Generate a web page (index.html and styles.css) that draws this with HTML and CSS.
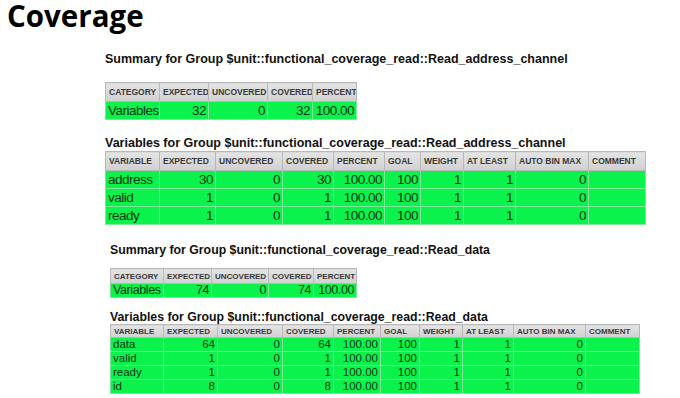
FILE: index.html
```html
<!DOCTYPE html>
<html lang="en">
<head>
  <meta charset="UTF-8">
  <title>Coverage</title>
  <link rel="stylesheet" href="styles.css">
</head>
<body>

  <h1 class="slide-title">Coverage</h1>

  <div class="group group-a">
    <h2 class="group-title t1">Summary for Group $unit::functional_coverage_read::Read_address_channel</h2>
    <table class="cov sum-a">
      <colgroup>
        <col style="width:54px"><col style="width:49px"><col style="width:59px"><col style="width:45px"><col style="width:44px">
      </colgroup>
      <tr class="head"><th>CATEGORY</th><th>EXPECTED</th><th>UNCOVERED</th><th>COVERED</th><th>PERCENT</th></tr>
      <tr><td class="name">Variables</td><td>32</td><td>0</td><td>32</td><td>100.00</td></tr>
    </table>

    <h2 class="group-title t2">Variables for Group $unit::functional_coverage_read::Read_address_channel</h2>
    <table class="cov var-a">
      <colgroup>
        <col style="width:54px"><col style="width:56px"><col style="width:67px"><col style="width:51px"><col style="width:51px">
        <col style="width:36px"><col style="width:43px"><col style="width:52px"><col style="width:73px"><col style="width:57px">
      </colgroup>
      <tr class="head"><th>VARIABLE</th><th>EXPECTED</th><th>UNCOVERED</th><th>COVERED</th><th>PERCENT</th><th>GOAL</th><th>WEIGHT</th><th>AT LEAST</th><th>AUTO BIN MAX</th><th>COMMENT</th></tr>
      <tr><td class="name">address</td><td>30</td><td>0</td><td>30</td><td>100.00</td><td>100</td><td>1</td><td>1</td><td>0</td><td></td></tr>
      <tr><td class="name">valid</td><td>1</td><td>0</td><td>1</td><td>100.00</td><td>100</td><td>1</td><td>1</td><td>0</td><td></td></tr>
      <tr><td class="name">ready</td><td>1</td><td>0</td><td>1</td><td>100.00</td><td>100</td><td>1</td><td>1</td><td>0</td><td></td></tr>
    </table>
  </div>

  <div class="group group-b">
    <h2 class="group-title t3">Summary for Group $unit::functional_coverage_read::Read_data</h2>
    <table class="cov sum-b">
      <colgroup>
        <col style="width:53px"><col style="width:48px"><col style="width:57px"><col style="width:45px"><col style="width:43px">
      </colgroup>
      <tr class="head"><th>CATEGORY</th><th>EXPECTED</th><th>UNCOVERED</th><th>COVERED</th><th>PERCENT</th></tr>
      <tr><td class="name">Variables</td><td>74</td><td>0</td><td>74</td><td>100.00</td></tr>
    </table>

    <h2 class="group-title t4">Variables for Group $unit::functional_coverage_read::Read_data</h2>
    <table class="cov var-b">
      <colgroup>
        <col style="width:53px"><col style="width:54px"><col style="width:65px"><col style="width:51px"><col style="width:47px">
        <col style="width:39px"><col style="width:43px"><col style="width:51px"><col style="width:72px"><col style="width:54px">
      </colgroup>
      <tr class="head"><th>VARIABLE</th><th>EXPECTED</th><th>UNCOVERED</th><th>COVERED</th><th>PERCENT</th><th>GOAL</th><th>WEIGHT</th><th>AT LEAST</th><th>AUTO BIN MAX</th><th>COMMENT</th></tr>
      <tr><td class="name">data</td><td>64</td><td>0</td><td>64</td><td>100.00</td><td>100</td><td>1</td><td>1</td><td>0</td><td></td></tr>
      <tr><td class="name">valid</td><td>1</td><td>0</td><td>1</td><td>100.00</td><td>100</td><td>1</td><td>1</td><td>0</td><td></td></tr>
      <tr><td class="name">ready</td><td>1</td><td>0</td><td>1</td><td>100.00</td><td>100</td><td>1</td><td>1</td><td>0</td><td></td></tr>
      <tr><td class="name">id</td><td>8</td><td>0</td><td>8</td><td>100.00</td><td>100</td><td>1</td><td>1</td><td>0</td><td></td></tr>
    </table>
  </div>

</body>
</html>
```

FILE: styles.css
```css
body {
  margin: 0;
  background-color: white;
  font-family: "Liberation Sans", Arial, sans-serif;
  color: #111;
}

.slide-title {
  margin: 0;
  padding: 0 0 0 7px;
  height: 40px;
  font-family: "Open Sans", sans-serif;
  font-weight: 700;
  font-size: 29.5px;
  line-height: 32px;
  color: #000;
}

.group-a {
  margin-left: 105px;
}

.group-b {
  margin-left: 110px;
}

.group-title {
  margin: 0;
  font-weight: bold;
  color: #111;
  white-space: nowrap;
}

.t1 {
  margin-top: 12px;
  font-size: 12.5px;
  line-height: 15px;
}

.t2 {
  margin-top: 16px;
  font-size: 12.5px;
  line-height: 15px;
}

.t3 {
  margin-top: 18px;
  font-size: 12.3px;
  line-height: 14px;
}

.t4 {
  margin-top: 12px;
  font-size: 12.3px;
  line-height: 14px;
}

.cov {
  border-collapse: collapse;
  table-layout: fixed;
  border: 1px solid #c8c8c8;
}

.cov th {
  background: linear-gradient(#e4e4e4, #d0d0d0);
  border: 1px solid #b8b8b8;
  color: #3a3a3a;
  font-size: 8.5px;
  font-weight: bold;
  text-align: left;
  padding: 0 0 0 3px;
  white-space: nowrap;
  overflow: hidden;
}

.cov td {
  background-color: #0cf24c;
  border: 1px solid #7fe79a;
  color: #0a3514;
  text-align: right;
  padding: 0 2px 0 0;
  white-space: nowrap;
  overflow: hidden;
}

.cov td.name {
  text-align: left;
  padding: 0 0 0 2px;
}

.sum-a {
  width: 252px;
  margin-top: 15px;
}

.var-a {
  width: 541px;
}

.sum-a .head th,
.var-a .head th {
  height: 18px;
}

.sum-a td,
.var-a td {
  height: 17px;
  font-size: 13.5px;
  line-height: 16px;
  letter-spacing: -0.5px;
}

.sum-b {
  width: 247px;
  margin-top: 11px;
}

.sum-b .head th {
  height: 14px;
  font-size: 8px;
}

.sum-b td {
  height: 13px;
  font-size: 12.5px;
  line-height: 13px;
  letter-spacing: -0.4px;
}

.var-b {
  width: 530px;
}

.var-b .head th {
  height: 12px;
  font-size: 8px;
}

.var-b td {
  height: 13px;
  font-size: 11.5px;
  line-height: 13px;
}
```
